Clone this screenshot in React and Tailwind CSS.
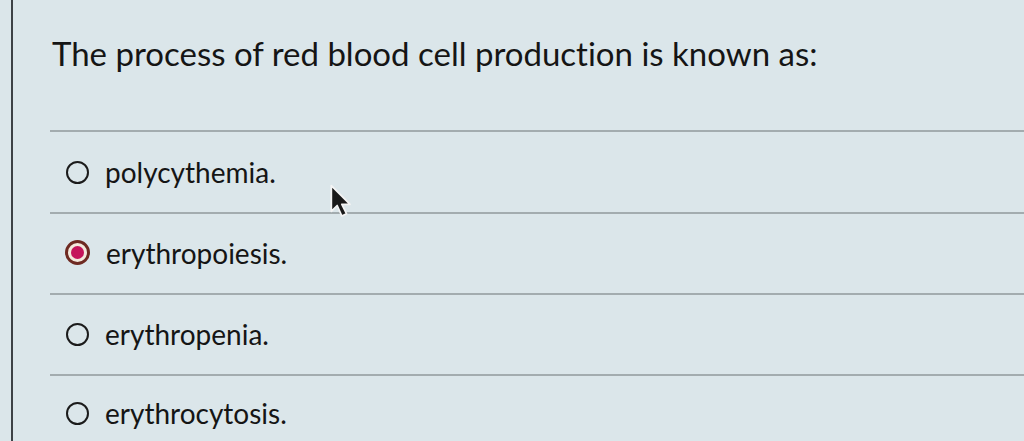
export default function App() {
  const options = [
    { label: "polycythemia.", selected: false, h: "h-[82px]" },
    { label: "erythropoiesis.", selected: true, h: "h-[81px] pb-[2px]" },
    { label: "erythropenia.", selected: false, h: "h-[81px] pb-[1px]" },
    { label: "erythrocytosis.", selected: false, h: "h-[81px] pb-[5px]" },
  ];
  return (
    <div
      className="relative w-[1024px] h-[441px] overflow-hidden bg-[#dbe6ea] flex [font-variant-ligatures:none]"
      style={{ fontFamily: "Lato, 'Open Sans', sans-serif" }}
    >
      <div className="ml-[11px] w-[2px] h-full bg-[#3d4246]" />
      <div className="flex-1 flex flex-col pl-[37px]">
        <div className="h-[130px] shrink-0 pt-[33px] text-[33px] leading-[40px] text-[#151515] pl-[2px]">
          The process of red blood cell production is known as:
        </div>
        {options.map((o, i) => (
          <div
            key={i}
            className={`${o.h} shrink-0 border-t-2 border-[#a3acaf] flex items-center pl-[15px]`}
          >
            {o.selected ? (
              <span className="w-[25px] h-[25px] rounded-full border-[3px] border-[#6e2a22] bg-[#f3e9dc] flex items-center justify-center">
                <span className="w-[13px] h-[13px] rounded-full bg-[#c5145a]" />
              </span>
            ) : (
              <span className="w-[23px] h-[23px] rounded-full border-2 border-[#1b1b1b] ml-[1px]" />
            )}
            <span className="ml-[16px] text-[28px] leading-[34px] text-[#151515]">
              {o.label}
            </span>
          </div>
        ))}
      </div>
      <svg
        className="absolute left-[329px] top-[183px]"
        width="28"
        height="38"
        viewBox="0 0 24 32"
      >
        <path
          d="M2 2 L2 24 L7 19 L11 28 L15 26 L11 18 L18 18 Z"
          fill="#1a1a1a"
          stroke="#f4f4f4"
          strokeWidth="1.5"
          strokeLinejoin="round"
        />
      </svg>
    </div>
  );
}
